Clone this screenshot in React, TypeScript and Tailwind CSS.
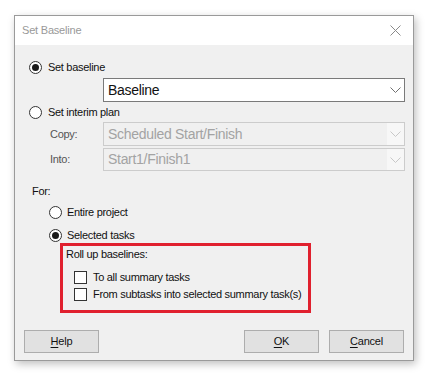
import React from "react";

const font = { fontFamily: '"Liberation Sans", Arial, sans-serif' };

function Radio({ checked }: { checked?: boolean }) {
  return (
    <div className="flex h-[13px] w-[13px] shrink-0 items-center justify-center rounded-full border border-[#333] bg-white">
      {checked && <div className="h-[7px] w-[7px] rounded-full bg-[#1a1a1a]" />}
    </div>
  );
}

function Check() {
  return <div className="h-[13px] w-[13px] shrink-0 border border-[#333] bg-white" />;
}

function Chevron({ color }: { color: string }) {
  return (
    <svg width="11" height="6" viewBox="0 0 11 6">
      <path d="M0.5 0.5 L5.5 5.5 L10.5 0.5" fill="none" stroke={color} strokeWidth="1" />
    </svg>
  );
}

function Combo({ value, disabled, h }: { value: string; disabled?: boolean; h: string }) {
  return (
    <div
      className={`flex w-[302px] items-center border ${h} ${
        disabled ? "border-[#cccccc] bg-[#f0f0f0] text-[#a3a3a3]" : "border-[#7a7a7a] bg-white text-[#111]"
      }`}
    >
      <span className="flex-1 pl-[4px] text-[14px] tracking-[-0.3px]">{value}</span>
      <div className={`flex h-full w-[17px] items-center justify-center ${disabled ? "bg-[#f7f7f7]" : ""}`}>
        <Chevron color={disabled ? "#c8c8c8" : "#707070"} />
      </div>
    </div>
  );
}

function Btn({ children }: { children: React.ReactNode }) {
  return (
    <div className="flex h-[23px] w-[75px] items-center justify-center border border-[#adadad] bg-[#e1e1e1] text-[11px] tracking-[-0.2px] text-[#111]">
      {children}
    </div>
  );
}

export default function App() {
  return (
    <div className="h-[381px] w-[431px] bg-white pl-[14px] pt-[15px]" style={font}>
      <div className="flex h-[346px] w-[400px] flex-col border border-[#9a9a9a] bg-[#f0f0f0] shadow-[2px_3px_8px_rgba(0,0,0,0.25)]">
        <div className="flex h-[29px] items-center justify-between bg-white pl-[7px] pr-[12px]">
          <span className="text-[11px] tracking-[-0.2px] text-[#999]">Set Baseline</span>
          <svg width="11" height="11" viewBox="0 0 11 11">
            <path d="M0.5 0.5 L10.5 10.5 M10.5 0.5 L0.5 10.5" stroke="#8a8a8a" strokeWidth="1" />
          </svg>
        </div>
        <div className="flex flex-col whitespace-nowrap pl-[14px] text-[11px] tracking-[-0.3px] text-[#111]">
          <div className="mt-[15px] flex h-[14px] items-center gap-[6px]">
            <Radio checked />
            <span>Set baseline</span>
          </div>
          <div className="ml-[74px] mt-[4px]">
            <Combo value="Baseline" h="h-[24px]" />
          </div>
          <div className="mt-[3px] flex h-[14px] items-center gap-[6px]">
            <Radio />
            <span>Set interim plan</span>
          </div>
          <div className="mt-[3px] flex items-center">
            <span className="w-[74px] pl-[21px] text-[#555]">Copy:</span>
            <Combo value="Scheduled Start/Finish" disabled h="h-[24px]" />
          </div>
          <div className="mt-[2px] flex items-center">
            <span className="w-[74px] pl-[21px] text-[#555]">Into:</span>
            <Combo value="Start1/Finish1" disabled h="h-[23px]" />
          </div>
          <div className="mt-[13px] flex h-[14px] items-center pl-[3px]">For:</div>
          <div className="mt-[7px] flex h-[14px] items-center gap-[5px] pl-[20px]">
            <Radio />
            <span>Entire project</span>
          </div>
          <div className="mt-[9px] flex h-[14px] items-center gap-[5px] pl-[20px]">
            <Radio checked />
            <span>Selected tasks</span>
          </div>
          <div className="ml-[31px] mt-[1px] h-[70px] w-[251px] border-[3px] border-[#e0202e]">
            <div className="mt-[1px] flex h-[14px] items-center pl-[3px]">Roll up baselines:</div>
            <div className="mt-[10px] flex h-[13px] items-center gap-[6px] pl-[11px]">
              <Check />
              <span>To all summary tasks</span>
            </div>
            <div className="mt-[4px] flex h-[13px] items-center gap-[6px] pl-[11px]">
              <Check />
              <span>From subtasks into selected summary task(s)</span>
            </div>
          </div>
          <div className="mt-[17px] flex pr-[9px]">
            <div className="-ml-[5px]">
              <Btn>
                <span className="underline underline-offset-2">H</span>elp
              </Btn>
            </div>
            <div className="ml-auto flex gap-[10px]">
              <Btn>
                <span className="underline underline-offset-2">O</span>K
              </Btn>
              <Btn>
                <span className="underline underline-offset-2">C</span>ancel
              </Btn>
            </div>
          </div>
        </div>
      </div>
    </div>
  );
}
